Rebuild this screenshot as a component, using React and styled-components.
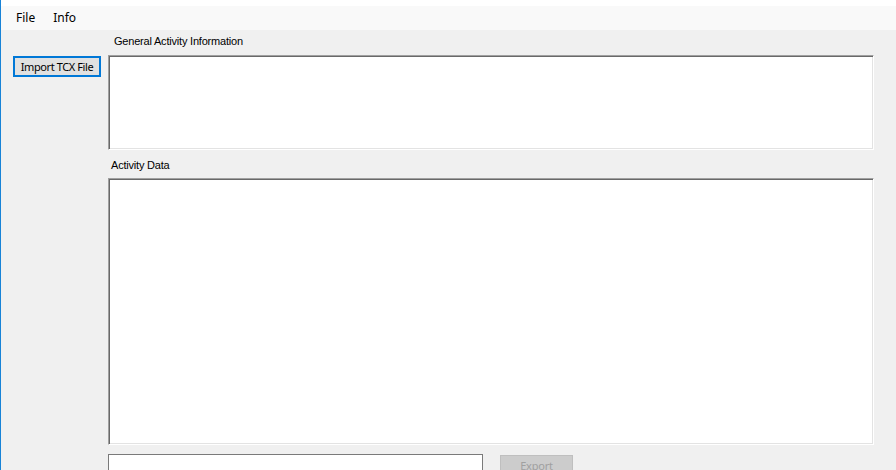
import React from 'react';
import styled, { createGlobalStyle } from 'styled-components';

const GlobalStyle = createGlobalStyle`
  html, body {
    margin: 0;
    padding: 0;
    background: #f0f0f0;
    overflow: hidden;
  }
`;

const MENU_ITEMS = ['File', 'Info'];

const UI_FONT = `'Noto Sans', 'Open Sans', sans-serif`;

const Window = styled.div`
  width: 896px;
  height: 470px;
  box-sizing: border-box;
  border-left: 1px solid #1883d7;
  background: #f0f0f0;
  display: flex;
  flex-direction: column;
  overflow: hidden;
`;

const TopStrip = styled.div`
  flex-shrink: 0;
  height: 6px;
  background: #ffffff;
`;

const MenuBar = styled.div`
  flex-shrink: 0;
  height: 24px;
  display: flex;
  align-items: center;
  padding-left: 8px;
  background: #f9f9f9;
  font-family: ${UI_FONT};
  font-size: 12px;
  color: #000;
`;

const MenuItem = styled.div`
  padding: 0 7px 1px;
  line-height: 20px;
  margin-right: 4px;
`;

const Body = styled.div`
  flex: 1 0 auto;
  display: grid;
  grid-template-columns: 107px 766px;
  align-items: start;
`;

const Side = styled.div`
  padding: 26px 0 0 12px;
`;

const ImportButton = styled.button`
  width: 88px;
  height: 21px;
  box-sizing: border-box;
  margin: 0;
  padding: 0 0 1px;
  border: 2px solid #0078d7;
  background: #e1e1e1;
  font-family: ${UI_FONT};
  font-size: 11px;
  letter-spacing: -0.4px;
  color: #000;
  white-space: nowrap;
`;

const Main = styled.div`
  display: flex;
  flex-direction: column;
`;

const Caption = styled.div`
  font-family: 'Liberation Sans', Arial, sans-serif;
  font-size: 11px;
  letter-spacing: -0.2px;
  line-height: 13px;
  height: 13px;
  color: #000;
  padding: ${(p) => p.$top}px 0 0 ${(p) => p.$indent}px;
  margin-bottom: ${(p) => p.$after}px;
`;

const TextArea = styled.div`
  flex-shrink: 0;
  height: ${(p) => p.$height}px;
  box-sizing: border-box;
  background: #fff;
  border: 1px solid;
  border-color: #a0a0a0 #ffffff #ffffff #a0a0a0;
  box-shadow: inset 1px 1px 0 #696969, inset -1px -1px 0 #e3e3e3;
`;

const Footer = styled.div`
  display: flex;
  align-items: flex-start;
  margin-top: 9px;
`;

const FileInput = styled.div`
  width: 375px;
  height: 22px;
  box-sizing: border-box;
  background: #fff;
  border: 1px solid #7a7a7a;
`;

const ExportButton = styled.button`
  width: 73px;
  height: 23px;
  box-sizing: border-box;
  margin: 1px 0 0 17px;
  padding: 0 0 3px;
  border: 1px solid #bfbfbf;
  background: #cccccc;
  color: #a0a0a0;
  font-family: ${UI_FONT};
  font-size: 11px;
  letter-spacing: -0.2px;
`;

export default function App() {
  return (
    <>
      <GlobalStyle />
      <Window>
        <TopStrip />
        <MenuBar>
          {MENU_ITEMS.map((item) => (
            <MenuItem key={item}>{item}</MenuItem>
          ))}
        </MenuBar>
        <Body>
          <Side>
            <ImportButton>Import TCX File</ImportButton>
          </Side>
          <Main>
            <Caption $top={5} $indent={6} $after={7}>
              General Activity Information
            </Caption>
            <TextArea $height={95} />
            <Caption $top={9} $indent={3} $after={6}>
              Activity Data
            </Caption>
            <TextArea $height={267} />
            <Footer>
              <FileInput />
              <ExportButton disabled>Export</ExportButton>
            </Footer>
          </Main>
        </Body>
      </Window>
    </>
  );
}
